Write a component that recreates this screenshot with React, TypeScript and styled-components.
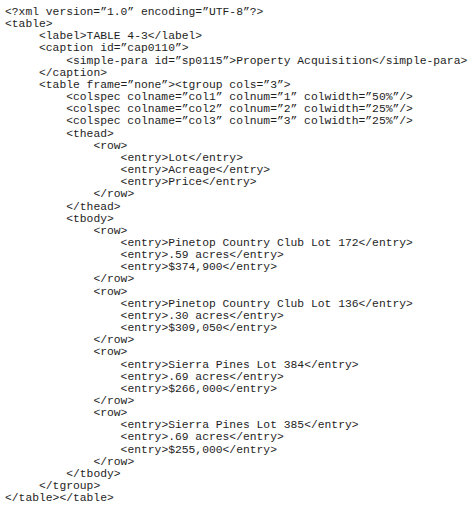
import React from "react";
import styled, { createGlobalStyle } from "styled-components";

const GlobalStyle = createGlobalStyle`
  html, body {
    margin: 0;
    padding: 0;
    background: #ffffff;
  }
`;

const Listing = styled.pre`
  margin: 0;
  padding: 6px 0 0 5px;
  font-family: "Liberation Mono", "Courier New", monospace;
  font-size: 11.33px;
  line-height: 12.15px;
  color: #1e1e1e;
  display: flex;
  flex-direction: column;
`;

const indents = [0, 5, 9, 13, 17];

const Line = styled.span<{ $level: number }>`
  display: block;
  white-space: pre;
  padding-left: ${(p) => indents[p.$level] * 6.8}px;
`;

const q = (s: string) => `\u201D${s}\u201D`;

const lines: [number, string][] = [
  [0, `<?xml version=${q("1.0")} encoding=${q("UTF-8")}?>`],
  [0, `<table>`],
  [1, `<label>TABLE 4-3</label>`],
  [1, `<caption id=${q("cap0110")}>`],
  [2, `<simple-para id=${q("sp0115")}>Property Acquisition</simple-para>`],
  [1, `</caption>`],
  [1, `<table frame=${q("none")}><tgroup cols=${q("3")}>`],
  [2, `<colspec colname=${q("col1")} colnum=${q("1")} colwidth=${q("50%")}/>`],
  [2, `<colspec colname=${q("col2")} colnum=${q("2")} colwidth=${q("25%")}/>`],
  [2, `<colspec colname=${q("col3")} colnum=${q("3")} colwidth=${q("25%")}/>`],
  [2, `<thead>`],
  [3, `<row>`],
  [4, `<entry>Lot</entry>`],
  [4, `<entry>Acreage</entry>`],
  [4, `<entry>Price</entry>`],
  [3, `</row>`],
  [2, `</thead>`],
  [2, `<tbody>`],
  [3, `<row>`],
  [4, `<entry>Pinetop Country Club Lot 172</entry>`],
  [4, `<entry>.59 acres</entry>`],
  [4, `<entry>$374,900</entry>`],
  [3, `</row>`],
  [3, `<row>`],
  [4, `<entry>Pinetop Country Club Lot 136</entry>`],
  [4, `<entry>.30 acres</entry>`],
  [4, `<entry>$309,050</entry>`],
  [3, `</row>`],
  [3, `<row>`],
  [4, `<entry>Sierra Pines Lot 384</entry>`],
  [4, `<entry>.69 acres</entry>`],
  [4, `<entry>$266,000</entry>`],
  [3, `</row>`],
  [3, `<row>`],
  [4, `<entry>Sierra Pines Lot 385</entry>`],
  [4, `<entry>.69 acres</entry>`],
  [4, `<entry>$255,000</entry>`],
  [3, `</row>`],
  [2, `</tbody>`],
  [1, `</tgroup>`],
  [0, `</table></table>`],
];

export default function App() {
  return (
    <>
      <GlobalStyle />
      <Listing>
        {lines.map(([level, text], i) => (
          <Line key={i} $level={level}>
            {text}
          </Line>
        ))}
      </Listing>
    </>
  );
}
